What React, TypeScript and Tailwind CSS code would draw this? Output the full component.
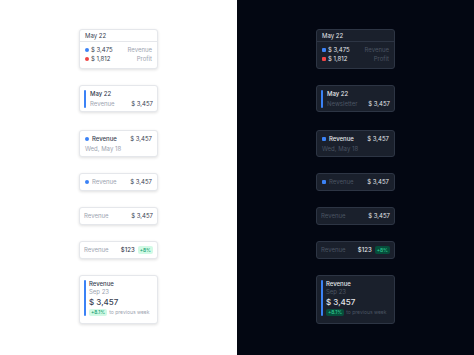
import React from "react";

type Theme = "light" | "dark";

function Card({ t, className = "", children }: { t: Theme; className?: string; children: React.ReactNode }) {
  const base =
    t === "light"
      ? "bg-white border border-[#e5e7eb] shadow-[0_1px_3px_rgba(0,0,0,0.12)]"
      : "bg-[#1a202c] border border-[#2d3544]";
  return <div className={`w-[79px] rounded-[3px] ${base} ${className}`}>{children}</div>;
}

function Dot({ t, color }: { t: Theme; color: string }) {
  return (
    <span
      className={`inline-block w-[4px] h-[4px] shrink-0 ${t === "light" ? "rounded-full" : "rounded-[1px]"} ${color}`}
    />
  );
}

function Bar() {
  return <div className="w-[2px] shrink-0 rounded-full bg-[#3b82f6]" />;
}

function Column({ t }: { t: Theme }) {
  const strong = t === "light" ? "text-[#374151]" : "text-[#e5e7eb]";
  const muted = t === "light" ? "text-[#9ca3af]" : "text-[#4b5563]";
  const divider = t === "light" ? "border-[#e5e7eb]" : "border-[#2d3544]";
  const badge =
    t === "light" ? "bg-[#d1fae5] text-[#059669]" : "bg-[#064e3b] text-[#34d399]";
  return (
    <div className="flex flex-col items-center pt-[29px] text-[6px] leading-[8px] whitespace-nowrap">
      {/* Card 1 */}
      <Card t={t}>
        <div className={`px-[5px] pt-[2px] pb-[1px] border-b ${divider} ${strong}`}>May 22</div>
        <div className="px-[5px] pt-[4px] pb-[5px] flex flex-col gap-[1px]">
          <div className="flex items-center justify-between">
            <div className={`flex items-center gap-[2px] ${strong}`}>
              <Dot t={t} color="bg-[#3b82f6]" />
              <span>$ 3,475</span>
            </div>
            <span className={muted}>Revenue</span>
          </div>
          <div className="flex items-center justify-between">
            <div className={`flex items-center gap-[2px] ${strong}`}>
              <Dot t={t} color="bg-[#ef4444]" />
              <span>$ 1,812</span>
            </div>
            <span className={muted}>Profit</span>
          </div>
        </div>
      </Card>

      {/* Card 2 */}
      <Card t={t} className="mt-[16px]">
        <div className="flex px-[4px] pt-[4px] pb-[3px] gap-[4px]">
          <Bar />
          <div className="flex-1 min-w-0 flex flex-col gap-[2px]">
            <span className={`${strong} font-medium`}>May 22</span>
            <div className="flex justify-between">
              <span className={muted}>{t === "light" ? "Revenue" : "Newsletter"}</span>
              <span className={strong}>$ 3,457</span>
            </div>
          </div>
        </div>
      </Card>

      {/* Card 3 */}
      <Card t={t} className="mt-[18px]">
        <div className="px-[5px] pt-[4px] pb-[3px] flex flex-col gap-[2px]">
          <div className="flex items-center justify-between">
            <div className={`flex items-center gap-[3px] ${strong} font-medium`}>
              <Dot t={t} color="bg-[#3b82f6]" />
              <span>Revenue</span>
            </div>
            <span className={strong}>$ 3,457</span>
          </div>
          <span className={muted}>Wed, May 18</span>
        </div>
      </Card>

      {/* Card 4 */}
      <Card t={t} className="mt-[16px]">
        <div className="px-[5px] py-[4px] flex items-center justify-between">
          <div className={`flex items-center gap-[3px] ${muted}`}>
            <Dot t={t} color="bg-[#3b82f6]" />
            <span>Revenue</span>
          </div>
          <span className={strong}>$ 3,457</span>
        </div>
      </Card>

      {/* Card 5 */}
      <Card t={t} className="mt-[16px]">
        <div className="px-[4px] py-[4px] flex items-center justify-between">
          <span className={muted}>Revenue</span>
          <span className={strong}>$ 3,457</span>
        </div>
      </Card>

      {/* Card 6 */}
      <Card t={t} className="mt-[16px]">
        <div className="px-[4px] py-[4px] flex items-center justify-between">
          <span className={muted}>Revenue</span>
          <div className="flex items-center gap-[3px]">
            <span className={`${strong} font-medium`}>$123</span>
            <span className={`rounded-[2px] px-[2px] text-[5px] leading-[8px] ${badge}`}>+8%</span>
          </div>
        </div>
      </Card>

      {/* Card 7 */}
      <Card t={t} className="mt-[16px]">
        <div className="flex px-[4px] pt-[4px] pb-[7px] gap-[3px]">
          <Bar />
          <div className="flex-1 min-w-0 flex flex-col">
            <span className={`${strong} font-medium leading-[8px]`}>Revenue</span>
            <span className={`${muted} leading-[7px]`}>Sep 23</span>
            <span className={`${strong} font-medium text-[8px] leading-[10px] mt-[2px]`}>$ 3,457</span>
            <div className="flex items-center gap-[2px] mt-[1px]">
              <span className={`rounded-[2px] px-[2px] text-[5px] leading-[7px] ${badge}`}>+8.1%</span>
              <span className={`${muted} text-[5px]`}>to previous week</span>
            </div>
          </div>
        </div>
      </Card>
    </div>
  );
}

export default function App() {
  return (
    <div
      className="grid grid-cols-2 w-[474px] h-[355px] overflow-hidden"
      style={{ fontFamily: "Inter, 'Noto Sans', sans-serif" }}
    >
      <div className="bg-white">
        <Column t="light" />
      </div>
      <div className="bg-[#030712]">
        <Column t="dark" />
      </div>
    </div>
  );
}
